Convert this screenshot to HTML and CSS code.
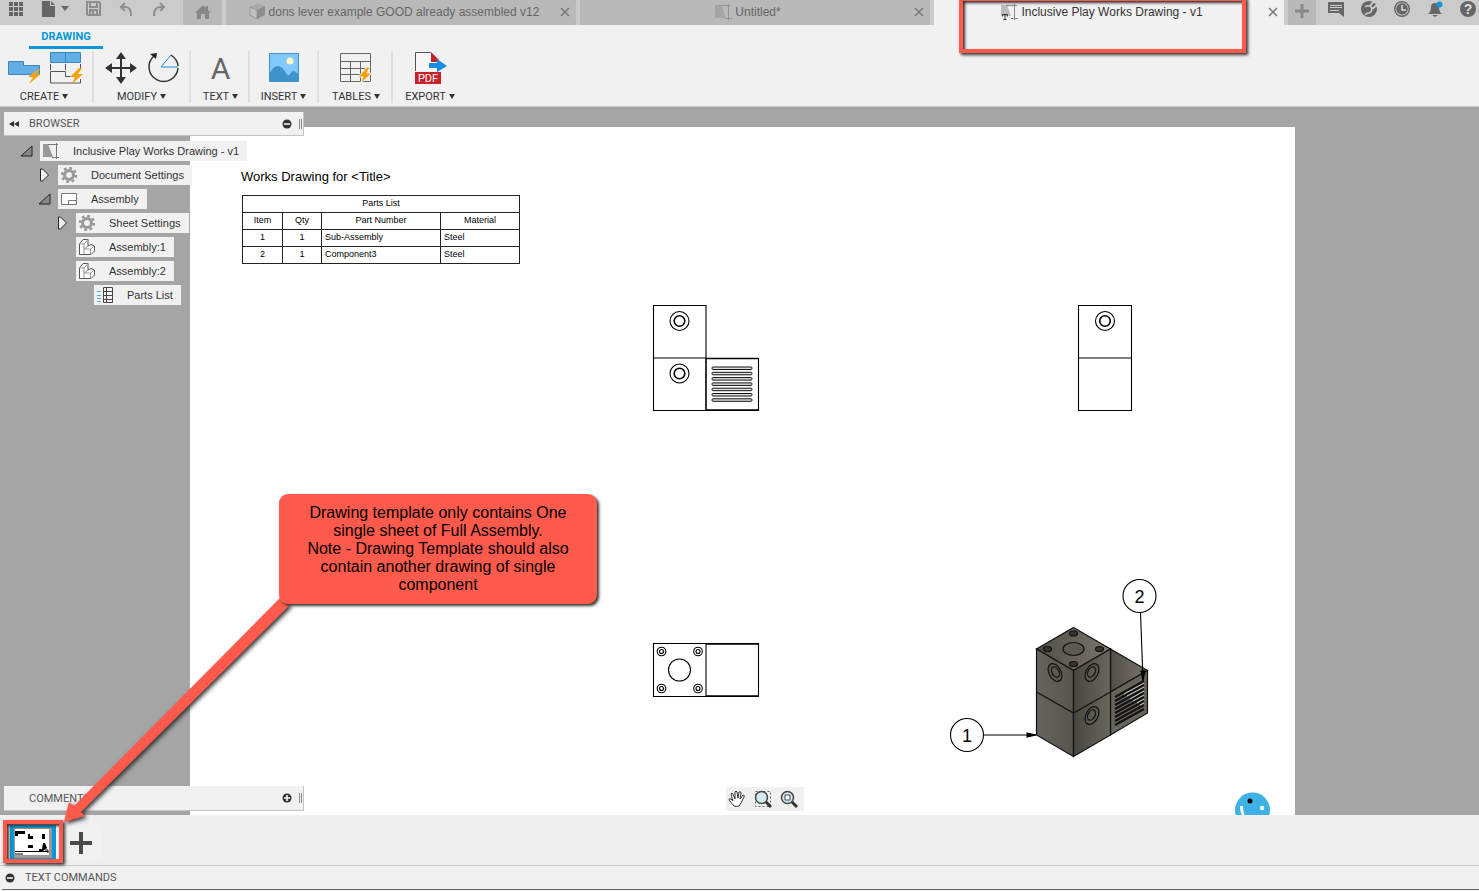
FILE: index.html
```html
<!DOCTYPE html>
<html lang="en">
<head>
	<title>Inclusive Play Works Drawing - v1</title>
	<meta charset="utf-8">
	<link rel="stylesheet" href="styles.css">
</head>
<body>
	<header class="topbar">
		<div class="quick">
			<button aria-label="Data panel"><svg width="16" height="16" fill="#666"><path d="M1 1h4v4H1zM6 1h4v4H6zM11 1h4v4h-4zM1 6h4v4H1zM6 6h4v4H6zM11 6h4v4h-4zM1 11h4v4H1zM6 11h4v4H6zM11 11h4v4h-4z"/></svg></button>
			<button class="file" aria-label="File"><svg width="28" height="16" fill="#666"><path d="M1 0h8v5h5v11H1zM10 0l4 4h-4zM20 5h8l-4 5z"/></svg></button>
			<button aria-label="Save"><svg width="16" height="16" fill="none" stroke="#8e8e8e" stroke-width="2"><path d="M1 1h12l1 1v12H2l-1-1zM4 1v5h7V1M4 14V9h7v5"/><path d="M7 10v4"/></svg></button>
			<button aria-label="Undo"><svg width="16" height="16" fill="none" stroke="#8e8e8e" stroke-width="2"><path d="M1 6h6q5 0 5 9"/><path d="M6 2L2 6l4 4"/></svg></button>
			<button aria-label="Redo"><svg width="16" height="16" fill="none" stroke="#8e8e8e" stroke-width="2"><path d="M13 6H8Q2 6 2 15"/><path d="M8 2l4 4-4 4"/></svg></button>
		</div>
		<button class="home" aria-label="Home"><svg width="16" height="14" fill="#888"><path d="M8 0l3 3V1h2v4l3 3h-2v6h-4V9H6v5H2V8H0z"/></svg></button>
		<div class="tab">
			<a href="#"><svg width="17" height="16"><path d="M0 3l9-3 7 2-8 4z" fill="#a9a9a9"/><path d="M1 3l7 3v9l-7-4z" fill="#c0c0c0" stroke="#999"/><path d="M8 6l8-4v9l-8 4z" fill="#8d8d8d"/></svg>dons lever example GOOD already assembled v12</a>
			<button aria-label="Close tab"><svg width="10" height="10" stroke="#777" stroke-width="1.5"><path d="M1 1l8 8M9 1L1 9"/></svg></button>
		</div>
		<div class="tab">
			<a href="#"><svg width="17" height="16"><path d="M0 1h6l5 13H0z" fill="#a5a5a5"/><path d="M4 1.500h12M13.500 0v16M10 14.500h7" stroke="#949494" fill="none"/></svg>Untitled*</a>
			<button aria-label="Close tab"><svg width="10" height="10" stroke="#777" stroke-width="1.5"><path d="M1 1l8 8M9 1L1 9"/></svg></button>
		</div>
		<div class="tab active">
			<a href="#"><svg width="17" height="16"><path d="M0 1h6l4 11H0z" fill="#bbb"/><path d="M5 1.500h11M13.500 0v16M10 14.500h7" stroke="#888" fill="none"/><path d="M1.500 12.500v-2h5v2M4 10.500v5M2.500 15.500h3" stroke="#333" fill="none"/></svg>Inclusive Play Works Drawing - v1</a>
			<button aria-label="Close tab"><svg width="10" height="10" stroke="#777" stroke-width="1.5"><path d="M1 1l8 8M9 1L1 9"/></svg></button>
			<div class="mark mark-tab"></div>
		</div>
		<button class="newtab" aria-label="New tab"><svg width="14" height="14" stroke="#888" stroke-width="3"><path d="M7 0v14M0 7h14"/></svg></button>
		<div class="status">
			<button aria-label="Comments"><svg width="16" height="16"><path d="M0 1h16v15l-5-4H0z" fill="#666"/><path d="M2 4.500h12M2 6.500h12M2 9.500h9" stroke="#ccc"/></svg></button>
			<button aria-label="Extensions"><svg width="16" height="16" fill="none"><circle cx="8" cy="8" r="8" fill="#666"/><path d="M16 4l-5 4M13 0L9 5" stroke="#ccc" stroke-width="2"/><path d="M4 6q4-3 7 1 0 4-3 5-3 0-4 2" stroke="#ccc" stroke-width="1.5"/></svg></button>
			<button aria-label="Job status"><svg width="16" height="16" fill="none"><circle cx="8" cy="8" r="7.300" stroke="#666" stroke-width="1.400"/><circle cx="8" cy="8" r="5.800" fill="#666"/><path d="M8 4v5h4" stroke="#ddd" stroke-width="1.500"/></svg></button>
			<button aria-label="Notifications"><svg width="16" height="16"><path d="M1 13q3-2 3-7 0-4 4-4t4 4q0 5 3 7zM5 14h6l-3 2z" fill="#666"/><circle cx="12.500" cy="3.500" r="3" fill="#0a96d7"/></svg></button>
			<button class="help" aria-label="Help">?</button>
		</div>
	</header>

	<nav class="ribbon">
		<a class="space" href="#">DRAWING</a>
		<div class="groups">
			<div class="group create">
				<div class="icons">
					<svg width="34" height="34"><path d="M2.500 10.500h15v4h16v9h-31z" fill="#62aee6" stroke="#3f86b8"/><path d="M32 18l-10 8h5l-4 7 12-10h-5l4-5z" fill="#f5a10b"/></svg>
					<svg width="34" height="34" fill="none"><path d="M1.500 1.500h30v10h-30zM16.500 1.500v10" fill="#62aee6" stroke="#3f86b8"/><path d="M1.500 13v6M16.500 13v6M31.500 13v5" stroke="#555"/><path d="M31.500 28v4h-30V20.500h15v5h5" stroke="#555"/><path d="M30 17l-9 9h5l-3 7 11-10h-5l4-6z" fill="#f5a10b"/></svg>
				</div>
				<button>CREATE <i class="caret"></i></button>
			</div>
			<div class="group modify">
				<div class="icons">
					<svg width="34" height="34"><path d="M18 1l5 7h-4v8h8v-4l7 5-7 5v-4h-8v8h4l-5 7-5-7h4v-8H9v4l-7-5 7-5v4h8V8h-4z" fill="#333"/></svg>
					<svg width="34" height="34" fill="none"><path d="M8 5A14.500 14.500 0 1 0 32 17M25 4q7 5 7 11" stroke="#333" stroke-width="1.500"/><path d="M4 3l7-1-1 6z" fill="#222"/><path d="M25 4L15 16h17" stroke="#168de2"/></svg>
				</div>
				<button>MODIFY <i class="caret"></i></button>
			</div>
			<div class="group text">
				<div class="icons letter">A</div>
				<button>TEXT <i class="caret"></i></button>
			</div>
			<div class="group insert">
				<div class="icons">
					<svg width="30" height="34"><path d="M1 3h28v28H1z" fill="#82c9ff"/><circle cx="21" cy="10" r="3.500" fill="#fffbc8"/><path d="M1 22q3-7 8-7 4 0 8 7 2 4 4 1 3-6 8 0v8H1z" fill="#3e93cd"/><path d="M.5 2.500h29v28H.5z" fill="none" stroke="#3e93cd"/></svg>
				</div>
				<button>INSERT <i class="caret"></i></button>
			</div>
			<div class="group tables">
				<div class="icons">
					<svg width="34" height="34" fill="none"><path d="M1.500 2.500h30v28h-30zM1.500 10.500h30M1.500 17.500h30M1.500 23.500h30M11.500 10v20M21.500 10v20" stroke="#666"/><path d="M28 16l-9 10h5l-3 7 12-11h-5l3-6z" fill="#f5a10b" stroke="#f1f1f1"/></svg>
				</div>
				<button>TABLES <i class="caret"></i></button>
			</div>
			<div class="group export">
				<div class="icons">
					<svg width="34" height="34"><path d="M2.500 20V1.500h15l8 8V20" fill="#f6f6f6" stroke="#555"/><path d="M18 1l8 8v2h-8z" fill="#c82127"/><path d="M16 12h8V8l10 7-10 6v-4h-8z" fill="#168de2"/><path d="M2 21h26v12H2z" fill="#c82127"/><text x="15" y="31" class="pdf">PDF</text></svg>
				</div>
				<button>EXPORT <i class="caret"></i></button>
			</div>
		</div>
	</nav>

	<main class="workspace">
		<section class="paper">
			<h1>Works Drawing for &lt;Title&gt;</h1>
			<table class="parts">
				<colgroup><col class="c-item"><col class="c-qty"><col class="c-part"><col class="c-mat"></colgroup>
				<tr><th colspan="4">Parts List</th></tr>
				<tr><th>Item</th><th>Qty</th><th>Part Number</th><th>Material</th></tr>
				<tr><td>1</td><td>1</td><td>Sub-Assembly</td><td>Steel</td></tr>
				<tr><td>2</td><td>1</td><td>Component3</td><td>Steel</td></tr>
			</table>
			<svg class="views" viewBox="190 127 1105 688" preserveAspectRatio="xMinYMin slice">
				<defs>
					<linearGradient id="top"><stop offset="0" stop-color="#514e47"/><stop offset="1" stop-color="#79756c"/></linearGradient>
					<linearGradient id="left"><stop offset="0" stop-color="#66645c"/><stop offset="1" stop-color="#57554e"/></linearGradient>
					<linearGradient id="right"><stop offset="0" stop-color="#48463f"/><stop offset="1" stop-color="#69665d"/></linearGradient>
				</defs>
				<!-- front view -->
				<g class="line">
					<path d="M653.500 305.500H706v105h-52.500zM653.500 358H706"/>
					<path d="M706 358.500h52.500v52H706z"/>
					<path class="bold" d="M706 358.500h52.500M706 410h52.500"/>
					<circle cx="679.500" cy="321" r="9.500"/><circle class="bold" cx="679.500" cy="321" r="5.300"/>
					<circle cx="679.500" cy="373.500" r="9.500"/><circle class="bold" cx="679.500" cy="373.500" r="5.300"/>
				</g>
				<g class="slot">
					<rect x="712" y="367" width="40" height="2.500" rx="1"/><rect x="712" y="372.300" width="40" height="2.500" rx="1"/>
					<rect x="712" y="377.600" width="40" height="2.500" rx="1"/><rect x="712" y="382.900" width="40" height="2.500" rx="1"/>
					<rect x="712" y="388.200" width="40" height="2.500" rx="1"/><rect x="712" y="393.500" width="40" height="2.500" rx="1"/>
					<rect x="712" y="398.800" width="40" height="2.500" rx="1"/>
				</g>
				<!-- side view -->
				<g class="line">
					<path d="M1078.500 305.500h53v105h-53zM1078.500 358h53"/>
					<circle cx="1105" cy="321" r="9.500"/><circle class="bold" cx="1105" cy="321" r="5.300"/>
				</g>
				<!-- plan view -->
				<g class="line">
					<path d="M653.500 643.500H706v53h-52.500zM706 643.500h52.500v53H706"/>
					<path class="bold" d="M706 644h52.500M706 696h52.500"/>
					<circle cx="679.500" cy="670" r="11"/>
					<circle cx="661.500" cy="651.500" r="4.300"/><circle cx="661.500" cy="651.500" r="2"/>
					<circle cx="698" cy="651.500" r="4.300"/><circle cx="698" cy="651.500" r="2"/>
					<circle cx="661.500" cy="688.500" r="4.300"/><circle cx="661.500" cy="688.500" r="2"/>
					<circle cx="698" cy="688.500" r="4.300"/><circle cx="698" cy="688.500" r="2"/>
				</g>
				<!-- isometric view -->
				<g class="iso">
					<path d="M1110.500 649l37 21.500-37 21.500z" fill="url(#top)"/>
					<path d="M1110.500 692l37-21.500V713l-37 22z" fill="#67645c"/>
					<path d="M1073.500 627.500l37 21.500-37 21.500-37-21.500z" fill="url(#top)"/>
					<path d="M1036.500 649l37 21.500v86l-37-21.500z" fill="url(#left)"/>
					<path d="M1073.500 670.500l37-21.500v86l-37 21.500z" fill="url(#right)"/>
					<path d="M1036.500 692l37 21 37-21" fill="none"/>
					<ellipse cx="1073.500" cy="649" rx="10.500" ry="6.500" fill="#5d5a53"/>
					<g fill="#37342f"><ellipse cx="1073.500" cy="633.500" rx="4" ry="2.500"/><ellipse cx="1047.500" cy="649" rx="4" ry="2.500"/><ellipse cx="1099.500" cy="649" rx="4" ry="2.500"/><ellipse cx="1073.500" cy="664" rx="4" ry="2.500"/></g>
					<g fill="#5b5850">
						<ellipse cx="1055" cy="672.500" rx="6" ry="9.500" transform="rotate(-28 1055 672.500)"/><ellipse cx="1055.500" cy="672" rx="3.500" ry="5.500" transform="rotate(-28 1055.500 672)"/>
						<ellipse cx="1092" cy="672.500" rx="6" ry="9.500" transform="rotate(28 1092 672.500)"/><ellipse cx="1091.500" cy="672" rx="3.500" ry="5.500" transform="rotate(28 1091.500 672)"/>
						<ellipse cx="1092" cy="715.500" rx="6" ry="9.500" transform="rotate(28 1092 715.500)"/><ellipse cx="1091.500" cy="715" rx="3.500" ry="5.500" transform="rotate(28 1091.500 715)"/>
					</g>
					<path d="M1115 697l29-16M1115 701l29-16M1115 705l29-16M1115 709l29-16M1115 713l29-16M1115 717l29-16M1115 721l29-16M1115 725l29-16" stroke="#111" stroke-width="2"/>
					<path d="M1124 694l20-11M1127 696l17-9M1130 699l14-8M1133 701l11-6M1137 703l7-4M1140 705l4-2" stroke="#ddd" stroke-width=".8"/>
				</g>
				<!-- balloons -->
				<g class="line">
					<circle cx="967" cy="735" r="16.500"/><circle cx="1139.500" cy="596" r="16.500"/>
					<path d="M983.500 735H1036M1140.500 612.500l2.500 68"/>
					<path d="M1027 733l9 2-9 2zM1141 671h4l-2 10z" fill="#000"/>
				</g>
				<text x="967" y="742" class="num">1</text>
				<text x="1139.500" y="603" class="num">2</text>
				<!-- assistant -->
				<circle cx="1252.500" cy="810" r="17.500" fill="#3fb2e5"/>
				<circle cx="1250" cy="801" r="2.500"/>
				<path d="M1241.500 806q0 6 2 9" stroke="#fff" stroke-width="3" fill="none"/><circle cx="1262" cy="808" r="2.200" fill="#fff"/>
			</svg>
		</section>

		<aside class="browser">
			<div class="panel">
				<svg width="12" height="8" fill="#333"><path d="M5 1v6L0 4zM10 1v6L5 4z"/></svg>
				<span>BROWSER</span>
				<button aria-label="Collapse browser"><svg width="10" height="10"><circle cx="5" cy="5" r="4.500" fill="#333"/><path d="M2 5h6" stroke="#fff" stroke-width="1.500"/></svg></button>
				<i class="grip"></i>
			</div>
			<ul class="tree">
				<li>
					<div class="row"><svg class="twist" width="14" height="14"><path d="M12 2v10H1z" fill="#888" stroke="#222"/></svg><a href="#"><svg width="16" height="16"><path d="M0 1h5l5 13H0z" fill="#999"/><path d="M5 1.500h10M13.500 0v16M9 14.500h7" stroke="#777" fill="none"/></svg>Inclusive Play Works Drawing - v1</a></div>
					<ul>
						<li><div class="row"><svg class="twist" width="14" height="14"><path d="M2.500 1h2l6 6-6 6h-2z" fill="#eee" stroke="#222"/></svg><a href="#"><svg width="16" height="16" fill="none" stroke="#999"><circle cx="8" cy="8" r="4.500" stroke-width="3"/><circle cx="8" cy="8" r="7" stroke-width="2.500" stroke-dasharray="2.750"/></svg>Document Settings</a></div></li>
						<li>
							<div class="row"><svg class="twist" width="14" height="14"><path d="M12 2v10H1z" fill="#888" stroke="#222"/></svg><a href="#"><svg width="16" height="16" fill="#fff" stroke="#777"><path d="M.5 2.500h15v11H.5zM7.500 13.500v-4h8"/></svg>Assembly</a></div>
							<ul>
								<li><div class="row"><svg class="twist" width="14" height="14"><path d="M2.500 1h2l6 6-6 6h-2z" fill="#eee" stroke="#222"/></svg><a href="#"><svg width="16" height="16" fill="none" stroke="#999"><circle cx="8" cy="8" r="4.500" stroke-width="3"/><circle cx="8" cy="8" r="7" stroke-width="2.500" stroke-dasharray="2.750"/></svg>Sheet Settings</a></div></li>
								<li><div class="row"><i class="twist"></i><a href="#"><svg width="16" height="16" fill="#fff" stroke="#555"><path d="M.5 5L4 .5h5V7l3-1.500L15.500 7v5L12 15.500H.5z"/><path d="M.5 5H5L9 .5M5 5v10.500M5 10l4-3M5 10h6.500v5.500M11.500 10l4-3" stroke="#999"/></svg>Assembly:1</a></div></li>
								<li>
									<div class="row"><i class="twist"></i><a href="#"><svg width="16" height="16" fill="#fff" stroke="#555"><path d="M.5 5L4 .5h5V7l3-1.500L15.500 7v5L12 15.500H.5z"/><path d="M.5 5H5L9 .5M5 5v10.500M5 10l4-3M5 10h6.500v5.500M11.500 10l4-3" stroke="#999"/></svg>Assembly:2</a></div>
									<ul>
										<li><div class="row"><i class="twist"></i><a href="#"><svg width="16" height="16" fill="none"><path d="M0 4.500h4M0 8.500h4M0 11.500h4M0 14.500h4" stroke="#5aa8e0"/><path d="M6.500.5h9v15h-9zM9.500.5v15M6.500 4.500h9M6.500 8.500h9M6.500 12.500h9" stroke="#444"/></svg>Parts List</a></div></li>
									</ul>
								</li>
							</ul>
						</li>
					</ul>
				</li>
			</ul>
		</aside>

		<div class="panel comments">
			<span>COMMENTS</span>
			<button aria-label="Expand comments"><svg width="10" height="10"><circle cx="5" cy="5" r="4.500" fill="#333"/><path d="M2 5h6M5 2v6" stroke="#fff" stroke-width="1.500"/></svg></button>
			<i class="grip"></i>
		</div>

		<div class="viewtools">
			<button aria-label="Pan"><svg width="18" height="18" fill="#fff" stroke="#333"><path d="M6 16L1 10q0-2 2-1l2 2L3 4q1-2 2 0l2 5V2q1-2 2 0l1 6 1-6q2-1 2 1l-1 6 3-4q2 0 1 2l-3 6-2 3q-3 1-5 0z"/></svg></button>
			<button aria-label="Zoom window"><svg width="18" height="18" fill="none"><path d="M1.500 1.500h15v15h-15z" stroke="#666" stroke-dasharray="2"/><circle cx="7.500" cy="7.500" r="6" fill="#d3e9ef" stroke="#444" stroke-width="1.500"/><path d="M12 12l5 5" stroke="#333" stroke-width="3"/></svg></button>
			<button aria-label="Fit"><svg width="18" height="18" fill="none"><circle cx="7.500" cy="7.500" r="6" fill="#d3e9ef" stroke="#444" stroke-width="1.500"/><path d="M5 5h5v5H5z" fill="#fff" stroke="#445"/><path d="M12 12l5 5" stroke="#333" stroke-width="3"/></svg></button>
		</div>
	</main>

	<div class="sheets">
		<button class="sheet" aria-label="Assembly">
			<svg width="38" height="30"><path d="M0 0h38v30H0z" fill="#999"/><path d="M1 1h34v26H1z" fill="#fff"/><path d="M1 3h10v3H4v2H1zM14 6h2v2h3v3h-5zM28 6h3v5h-3zM14 17h5v3h-5zM29 15h2l2 5-4 3h-4v-2h3z" fill="#000"/><path d="M1 23.500h33M1 26h8M31 22h3v3" stroke="#000" fill="none"/></svg>
			<span class="mark mark-sheet"></span>
		</button>
		<button class="add" aria-label="Add sheet"><svg width="22" height="22" stroke="#4a4a4a" stroke-width="4"><path d="M11 0v22M0 11h22"/></svg></button>
	</div>
	<footer class="commands">
		<div class="cmdhead">
			<button aria-label="Collapse text commands"><svg width="10" height="10"><circle cx="5" cy="5" r="4.500" fill="#333"/><path d="M2 5h6" stroke="#fff" stroke-width="1.500"/></svg></button>
			<span>TEXT COMMANDS</span>
		</div>
	</footer>

	<!-- note with arrow to the sheet thumbnail -->
	<svg class="arrow" width="300" height="240" viewBox="0 591 300 240"><path d="M64 822l5-20 5 4 207-209 9 8L81 812l4 4z" fill="#ff5a4c"/></svg>
	<div class="note">Drawing template only contains One single sheet of Full Assembly.<br>Note - Drawing Template should also contain another drawing of single component</div>
</body>
</html>
```

FILE: styles.css
```css
* {
	box-sizing: border-box;
}
body {
	margin: 0;
	height: 100vh;
	display: flex;
	flex-direction: column;
	position: relative;
	overflow: hidden;
	background: #f1f1f1;
	color: #333;
	font: 11px "Liberation Sans", Arial, sans-serif;
}
button {
	display: flex;
	align-items: center;
	justify-content: center;
	padding: 0;
	border: 0;
	background: none;
	color: inherit;
	font: inherit;
}
a {
	color: inherit;
	text-decoration: none;
}
svg {
	display: block;
	flex: none;
}

/* top bar */
.topbar {
	display: flex;
	height: 25px;
	background: #cbcbcb;
}
.quick {
	display: flex;
	align-items: flex-start;
	gap: 17px;
	width: 183px;
	padding: 1px 0 0 8px;
}
.home {
	width: 39px;
	margin-right: 4px;
	padding-bottom: 2px;
	background: #b9b9b9;
}
.tab {
	position: relative;
	display: flex;
	flex: 1;
	min-width: 0;
	margin-right: 4px;
	padding-bottom: 2px;
	background: #b9b9b9;
	color: #666;
	font-size: 12px;
}
.tab a {
	display: flex;
	flex: 1;
	align-items: center;
	justify-content: center;
	gap: 3px;
	padding-left: 8px;
	white-space: nowrap;
}
.tab button {
	width: 22px;
}
.tab.active {
	background: #f1f1f1;
	color: #333;
}
.newtab {
	width: 28px;
	padding-bottom: 4px;
	background: #b9b9b9;
}
.status {
	display: flex;
	align-items: flex-start;
	gap: 17px;
	padding: 1px 3px 0 12px;
}
.help {
	width: 16px;
	height: 16px;
	border-radius: 8px;
	background: #666;
	color: #ddd;
	font-size: 14px;
	font-weight: bold;
}

/* ribbon */
.ribbon {
	height: 82px;
	background: #f1f1f1;
	border-bottom: 1px solid #c8c8c8;
	font-family: Roboto, sans-serif;
}
.space {
	display: block;
	width: 74px;
	height: 24px;
	margin-left: 29px;
	border-bottom: 3px solid #0a96d7;
	color: #0a96d7;
	font-weight: bold;
	line-height: 23px;
	text-align: center;
}
.groups {
	display: flex;
	padding-top: 2px;
}
.group {
	display: flex;
	flex-direction: column;
	align-items: center;
	height: 52px;
	border-right: 2px solid #dedede;
}
.icons {
	display: flex;
	flex: none;
	justify-content: center;
	gap: 9px;
	height: 34px;
}
.group button {
	flex: none;
	height: 24px;
	gap: 3px;
	line-height: 24px;
}
.caret {
	margin-bottom: 2px;
	border: 3px solid transparent;
	border-top: 5px solid #333;
	border-bottom: 0;
}
.letter {
	color: #666;
	font-size: 30px;
	line-height: 36px;
}
.pdf {
	fill: #fff;
	font-size: 11px;
	text-anchor: middle;
}
.create {
	width: 94px;
	padding-right: 4px;
}
.modify {
	width: 97px;
}
.text {
	width: 59px;
	padding-left: 2px;
}
.insert {
	width: 69px;
}
.tables {
	width: 74px;
	padding-left: 2px;
}
.export {
	width: 74px;
	border-right: 0;
}

/* drawing */
.workspace {
	position: relative;
	display: flex;
	flex: 1;
	min-height: 0;
	padding: 20px 184px 0 190px;
	background: #a5a5a5;
}
.paper {
	position: relative;
	flex: 1;
	overflow: hidden;
	padding: 42px 51px;
	background: #fff;
	color: #000;
}
.paper h1 {
	margin: 0 0 10px;
	font-size: 13px;
	font-weight: normal;
	line-height: 16px;
}
.parts {
	width: 278px;
	margin-left: 1px;
	border-collapse: collapse;
	table-layout: fixed;
	font-size: 9px;
	line-height: 14px;
}
.parts th, .parts td {
	height: 17px;
	padding: 0 3px 2px;
	border: 1px solid #222;
	font-weight: normal;
	text-align: left;
}
.parts th, .parts td:nth-child(-n+2) {
	text-align: center;
}
.c-item {
	width: 40px;
}
.c-qty {
	width: 39px;
}
.c-part {
	width: 119px;
}
.views {
	position: absolute;
	top: 0;
	left: 0;
	width: 100%;
	height: 100%;
	pointer-events: none;
}
.line {
	fill: none;
	stroke: #000;
	stroke-width: 1.1;
}
.bold {
	stroke-width: 1.6;
}
.slot {
	fill: #ddd;
	stroke: #111;
}
.iso {
	stroke: #111;
	stroke-width: 1.2;
}
.num {
	font-size: 18px;
	text-anchor: middle;
}

/* panels over the drawing */
.browser {
	position: absolute;
	top: 5px;
	left: 4px;
}
.panel {
	display: flex;
	align-items: center;
	width: 300px;
	height: 24px;
	padding-left: 5px;
	background: #f1f1f1;
	border-right: 1px solid #c4c4c4;
	border-bottom: 1px solid #c4c4c4;
	color: #555;
	font-family: Roboto, sans-serif;
}
.panel span {
	flex: 1;
	margin-left: 8px;
}
.comments {
	position: absolute;
	bottom: 4px;
	left: 4px;
	height: 25px;
	padding-left: 17px;
}
.grip {
	width: 3px;
	height: 10px;
	margin: 0 1px 0 7px;
	border: 1px solid #888;
	border-width: 0 1px;
}
.tree, .tree ul {
	margin: 0;
	padding: 0;
	list-style: none;
}
.tree {
	padding: 3px 0 0 16px;
}
.tree ul {
	padding-left: 18px;
}
.row {
	display: flex;
	align-items: center;
	height: 24px;
}
.twist {
	width: 14px;
	margin-right: 6px;
}
.row a {
	display: flex;
	align-items: center;
	gap: 14px;
	height: 20px;
	padding: 0 8px 0 3px;
	background: #f1f1f1;
	white-space: nowrap;
}
.viewtools {
	position: absolute;
	bottom: 4px;
	left: calc(50% - 14px);
	display: flex;
	gap: 8px;
	height: 24px;
	padding: 0 6px 0 2px;
	background: #f0f0f0;
}

/* bottom bars */
.sheets {
	display: flex;
	align-items: center;
	gap: 10px;
	height: 50px;
	padding: 6px 0 0 10px;
	background: #efefef;
}
.sheet {
	position: relative;
	width: 46px;
	height: 36px;
	background: #0a96d7;
}
.add {
	width: 36px;
	height: 36px;
	background: #f1f1f1;
	padding-right: 6px;
}
.commands {
	height: 26px;
	padding-left: 2px;
	border-top: 1px solid #c8c8c8;
	color: #555;
	font-family: Roboto, sans-serif;
}
.cmdhead {
	display: flex;
	align-items: center;
	gap: 10px;
	height: 24px;
	padding-left: 3px;
	border-bottom: 1px solid #666;
}

/* markup */
.mark {
	position: absolute;
	z-index: 2;
	border: 4px solid #ff5a4c;
	box-shadow: 2px 2px 3px #333, inset 2px 2px 3px #333;
	pointer-events: none;
}
.mark-tab {
	top: -3px;
	left: 25px;
	width: 287px;
	height: 56px;
}
.mark-sheet {
	top: -5px;
	left: -7px;
	width: 60px;
	height: 43px;
}
.arrow {
	position: absolute;
	top: 591px;
	left: 0;
	z-index: 3;
	filter: drop-shadow(2px 2px 2px #333);
	pointer-events: none;
}
.note {
	position: absolute;
	top: 494px;
	left: 279px;
	z-index: 3;
	width: 318px;
	padding: 10px 20px;
	border-radius: 9px;
	background: #ff5a4c;
	box-shadow: 2px 2px 3px #333;
	color: #000;
	font-size: 16px;
	line-height: 18px;
	text-align: center;
}
```
